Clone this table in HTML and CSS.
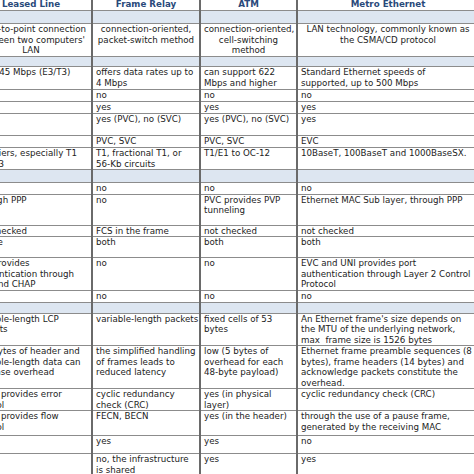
FILE: index.html
```html
<!DOCTYPE html>
<html>
<head>
<meta charset="utf-8">
<link rel="stylesheet" href="styles.css">
</head>
<body>
<div class="frame">
<table class="cmp">
  <colgroup>
    <col class="c-leased">
    <col class="c-frame">
    <col class="c-atm">
    <col class="c-metro">
  </colgroup>
  <thead>
    <tr class="head">
      <th>Leased Line</th>
      <th>Frame Relay</th>
      <th>ATM</th>
      <th>Metro Ethernet</th>
    </tr>
  </thead>
  <tbody>
    <tr class="sec h13"><td></td><td></td><td></td><td></td></tr>
    <tr class="center h33">
      <td>point-to-point connection<br>between two computers'<br>LAN</td>
      <td>connection-oriented,<br>packet-switch method</td>
      <td>connection-oriented,<br>cell-switching<br>method</td>
      <td>LAN technology, commonly known as<br>the CSMA/CD protocol</td>
    </tr>
    <tr class="sec h10"><td></td><td></td><td></td><td></td></tr>
    <tr class="h23">
      <td>up to 45 Mbps (E3/T3)</td>
      <td>offers data rates up to<br>4 Mbps</td>
      <td>can support 622<br>Mbps and higher</td>
      <td>Standard Ethernet speeds of<br>supported, up to 500 Mbps</td>
    </tr>
    <tr class="h12"><td></td><td>no</td><td>no</td><td>no</td></tr>
    <tr class="h12"><td></td><td>yes</td><td>yes</td><td>yes</td></tr>
    <tr class="h22"><td></td><td>yes (PVC), no (SVC)</td><td>yes (PVC), no (SVC)</td><td>yes</td></tr>
    <tr class="h12"><td></td><td>PVC, SVC</td><td>PVC, SVC</td><td>EVC</td></tr>
    <tr class="h21">
      <td>T-carriers, especially T1<br>and T3</td>
      <td>T1, fractional T1, or<br>56-Kb circuits</td>
      <td>T1/E1 to OC-12</td>
      <td>10BaseT, 100BaseT and 1000BaseSX.</td>
    </tr>
    <tr class="sec h13"><td></td><td></td><td></td><td></td></tr>
    <tr class="h11"><td></td><td>no</td><td>no</td><td>no</td></tr>
    <tr class="h31">
      <td>through PPP</td>
      <td>no</td>
      <td>PVC provides PVP<br>tunneling</td>
      <td>Ethernet MAC Sub layer, through PPP</td>
    </tr>
    <tr class="h11"><td>not checked</td><td>FCS in the frame</td><td>not checked</td><td>not checked</td></tr>
    <tr class="h21"><td>secure</td><td>both</td><td>both</td><td>both</td></tr>
    <tr class="h33">
      <td>PPP provides<br>authentication through<br>PAP and CHAP</td>
      <td>no</td>
      <td>no</td>
      <td>EVC and UNI provides port<br>authentication through Layer 2 Control<br>Protocol</td>
    </tr>
    <tr class="h11"><td></td><td>no</td><td>no</td><td>no</td></tr>
    <tr class="sec h11"><td></td><td></td><td></td><td></td></tr>
    <tr class="h31">
      <td>variable-length LCP<br>packets</td>
      <td>variable-length packets</td>
      <td>fixed cells of 53<br>bytes</td>
      <td>An Ethernet frame's size depends on<br>the MTU of the underlying network,<br>max&nbsp; frame size is 1526 bytes</td>
    </tr>
    <tr class="h42">
      <td>few bytes of header and<br>variable-length data can<br>increase overhead</td>
      <td>the simplified handling<br>of frames leads to<br>reduced latency</td>
      <td>low (5 bytes of<br>overhead for each<br>48-byte payload)</td>
      <td>Ethernet frame preamble sequences (8<br>bytes), frame headers (14 bytes) and<br>acknowledge packets constitute the<br>overhead.</td>
    </tr>
    <tr class="h20">
      <td>HDLC provides error<br>control</td>
      <td>cyclic redundancy<br>check (CRC)</td>
      <td>yes (in physical<br>layer)</td>
      <td>cyclic redundancy check (CRC)</td>
    </tr>
    <tr class="h25">
      <td>HDLC provides flow<br>control</td>
      <td>FECN, BECN</td>
      <td>yes (in the header)</td>
      <td>through the use of a pause frame,<br>generated by the receiving MAC</td>
    </tr>
    <tr class="h18"><td></td><td>yes</td><td>yes</td><td>no</td></tr>
    <tr class="h34"><td></td><td>no, the infrastructure<br>is shared</td><td>yes</td><td>yes</td></tr>
  </tbody>
</table>
</div>
</body>
</html>
```
FILE: styles.css
```css
html, body {
  margin: 0;
  padding: 0;
  background: #ffffff;
}
body {
  width: 474px;
  height: 474px;
  overflow: hidden;
}
.frame {
  width: 474px;
  height: 474px;
  overflow: hidden;
}
.cmp {
  margin-left: -31px;
  margin-top: -2px;
  width: 509px;
  table-layout: fixed;
  border-collapse: collapse;
  font-family: "DejaVu Sans", Verdana, sans-serif;
  font-size: 8.7px;
  line-height: 10.5px;
  color: #222222;
}
.c-leased { width: 122px; }
.c-frame { width: 108px; }
.c-atm { width: 97px; }
.c-metro { width: 182px; }

.cmp th,
.cmp td {
  padding: 0 3px;
  vertical-align: top;
  text-align: left;
  border-left: 2px solid #6a6a6a;
  border-right: 2px solid #6a6a6a;
  border-top: 1px solid #8c8c8c;
  border-bottom: 1px solid #8c8c8c;
  white-space: nowrap;
  overflow: hidden;
}
.cmp .head th {
  height: 12px;
  text-align: center;
  vertical-align: middle;
  font-weight: bold;
  color: #29497a;
  border-top: none;
}
.center td { text-align: center; }
.sec td { background: #dde6f1; }

.h10 { height: 10px; }
.h11 { height: 11px; }
.h12 { height: 12px; }
.h13 { height: 13px; }
.h18 { height: 18px; }
.h20 { height: 20px; }
.h21 { height: 21px; }
.h22 { height: 22px; }
.h23 { height: 23px; }
.h25 { height: 25px; }
.h31 { height: 31px; }
.h33 { height: 33px; }
.h34 { height: 34px; }
.h42 { height: 42px; }
```
